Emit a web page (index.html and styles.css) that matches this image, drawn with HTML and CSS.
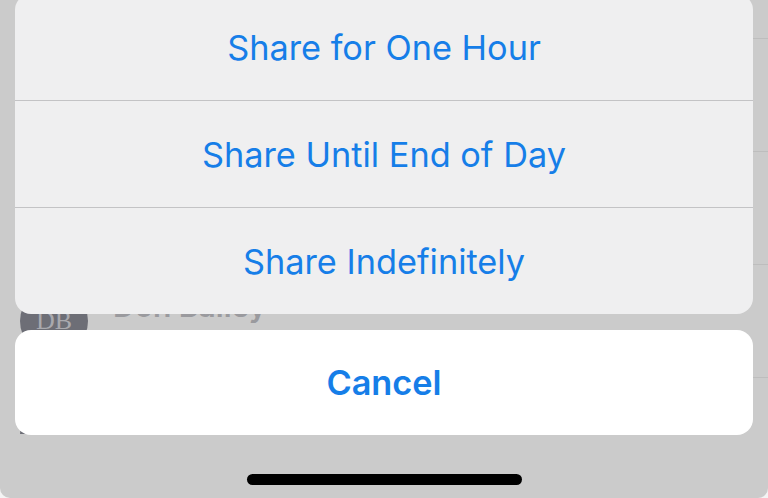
FILE: index.html
```html
<!DOCTYPE html>
<html>
<head>
<meta charset="utf-8">
<link rel="stylesheet" href="styles.css">
</head>
<body>
<div class="screen">
  <div class="list">
    <div class="row"><div class="avatar">AB</div><div class="name">Anna Bell</div></div>
    <div class="row"><div class="avatar">CD</div><div class="name">Chris Dale</div></div>
    <div class="row"><div class="avatar">EF</div><div class="name">Eva Ford</div></div>
    <div class="row"><div class="avatar">DB</div><div class="name">Don Bailey</div></div>
    <div class="row"><div class="avatar">GH</div><div class="name">Gina Hart</div></div>
  </div>
  <div class="overlay">
    <div class="sheet">
      <div class="action">Share for One Hour</div>
      <div class="action">Share Until End of Day</div>
      <div class="action">Share Indefinitely</div>
    </div>
    <div class="cancel">Cancel</div>
    <div class="home"></div>
  </div>
</div>
</body>
</html>
```
FILE: styles.css
```css
html, body {
  margin: 0;
  padding: 0;
  width: 768px;
  height: 498px;
  overflow: hidden;
  background: #f4f4f4;
  font-family: Inter, "Noto Sans", sans-serif;
}
.screen {
  position: relative;
  width: 768px;
  height: 498px;
  background: #cbcbcb;
  border-radius: 0 0 10px 10px;
  overflow: hidden;
}
.list {
  margin-top: -74px;
  height: 508px;
  overflow: hidden;
}
.row {
  height: 112px;
  border-bottom: 1px solid #bdbdbd;
  margin-left: 113px;
  position: relative;
}
.avatar {
  position: absolute;
  left: -93px;
  top: 22px;
  width: 68px;
  height: 68px;
  border-radius: 50%;
  background: #6d6e76;
  color: #a9a9ae;
  font-family: "Liberation Serif", serif;
  font-size: 26px;
  display: flex;
  align-items: center;
  justify-content: center;
}
.name {
  position: absolute;
  left: 0;
  top: 23px;
  color: #9a9a9e;
  font-size: 30px;
  font-weight: 600;
}
.overlay {
  position: absolute;
  inset: 0;
  display: flex;
  flex-direction: column;
  padding: 0 15px;
}
.sheet {
  margin-top: -6px;
  background: #efeff0;
  border-radius: 16px;
  overflow: hidden;
}
.action {
  height: 106px;
  display: flex;
  align-items: center;
  justify-content: center;
  color: #167ee8;
  font-size: 34.3px;
  font-weight: 400;
}
.action + .action {
  border-top: 1px solid #c3c3c5;
}
.cancel {
  margin-top: 16px;
  height: 105px;
  background: #ffffff;
  border-radius: 16px;
  display: flex;
  align-items: center;
  justify-content: center;
  color: #167ee8;
  font-size: 34.3px;
  font-weight: 600;
}
.home {
  align-self: center;
  margin-top: 39px;
  width: 275px;
  height: 11px;
  border-radius: 6px;
  background: #000000;
}
```
